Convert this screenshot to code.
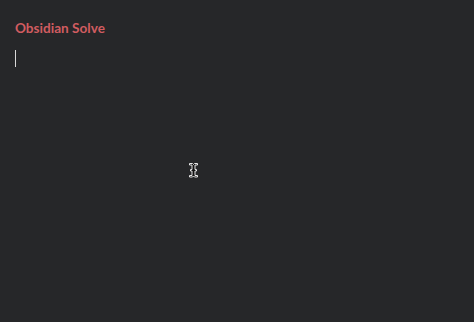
import React from "react";

export default function App() {
  return (
    <div className="relative w-[474px] h-[322px] bg-[#262729] overflow-hidden" style={{ fontFamily: "Lato, 'Noto Sans', sans-serif" }}>
      <div className="px-[15px] pt-[20px]">
        <div className="text-[13.6px] font-bold text-[#d05c60] leading-[16px]">Obsidian Solve</div>
        <div className="mt-[14px] w-px h-[17px] bg-[#d8d8d8]" />
      </div>
      <svg className="absolute left-[188px] top-[162px]" width="11" height="17" viewBox="0 0 11 17">
        <path d="M1.5 1.5h3l1 1 1-1h3v1.5h-2.5v4.5h1.5v1.5h-1.5v4.5h2.5v1.5h-3l-1-1-1 1h-3v-1.5h2.5v-4.5h-1.5v-1.5h1.5v-4.5h-2.5z" fill="#111" stroke="#e8e8e8" strokeWidth="1" />
      </svg>
    </div>
  );
}
